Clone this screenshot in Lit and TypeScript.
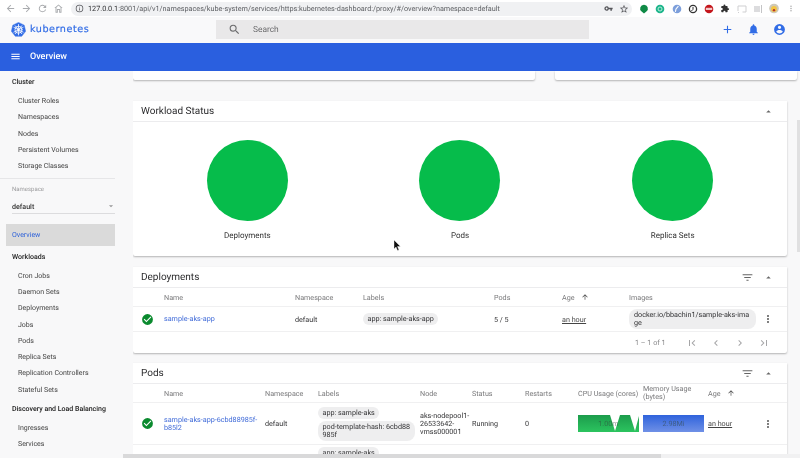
import { LitElement, html, css, svg } from "lit";
import { customElement } from "lit/decorators.js";

const icon = (d: string, size = 12, cls = "") =>
  html`<svg class=${cls} width=${size} height=${size} viewBox="0 0 24 24" fill="currentColor"><path d=${d}></path></svg>`;

const P = {
  back: "M20 11H7.8l5.6-5.6L12 4l-8 8 8 8 1.4-1.4L7.8 13H20z",
  fwd: "M4 11h12.2l-5.6-5.6L12 4l8 8-8 8-1.4-1.4 5.6-5.6H4z",
  reload: "M17.65 6.35A8 8 0 1 0 19.73 14h-2.08A6 6 0 1 1 12 6c1.66 0 3.14.69 4.22 1.78L13 11h7V4z",
  home: "M12 3 3 11h2.5v10h5v-6h3v6h5V11H21zM12 5.7l4.5 4V19h-1v-6h-7v6h-1v-9.3z",
  info: "M11 7h2v2h-2zm0 4h2v6h-2zm1-9a10 10 0 1 0 0 20 10 10 0 0 0 0-20zm0 18a8 8 0 1 1 0-16 8 8 0 0 1 0 16z",
  key: "M12.65 10A6 6 0 1 0 12.65 14H17v4h4v-4h2v-4zM7 14.5a2.5 2.5 0 1 1 0-5 2.5 2.5 0 0 1 0 5z",
  star: "M22 9.24l-7.19-.62L12 2 9.19 8.63 2 9.24l5.46 4.73L5.82 21 12 17.27 18.18 21l-1.63-7.03zM12 15.4l-3.76 2.27 1-4.28-3.32-2.88 4.38-.38L12 6.1l1.71 4.04 4.38.38-3.32 2.88 1 4.28z",
  puzzle: "M20.5 11H19V7a2 2 0 0 0-2-2h-4V3.5a2.5 2.5 0 0 0-5 0V5H4a2 2 0 0 0-2 2v3.8h1.5a2.7 2.7 0 0 1 0 5.4H2V20a2 2 0 0 0 2 2h3.8v-1.5a2.7 2.7 0 0 1 5.4 0V22H17a2 2 0 0 0 2-2v-4h1.5a2.5 2.5 0 0 0 0-5z",
  search: "M15.5 14h-.79l-.28-.27A6.471 6.471 0 0 0 16 9.5 6.5 6.5 0 1 0 9.5 16c1.61 0 3.09-.59 4.23-1.57l.27.28v.79l5 4.99L20.49 19l-4.99-5zm-6 0C7.01 14 5 11.99 5 9.5S7.01 5 9.5 5 14 7.01 14 9.5 11.99 14 9.5 14z",
  plus: "M19 13h-6v6h-2v-6H5v-2h6V5h2v6h6z",
  bell: "M12 22a2 2 0 0 0 2-2h-4a2 2 0 0 0 2 2zm6-6v-5c0-3.1-1.6-5.6-4.5-6.3V4a1.5 1.5 0 0 0-3 0v.7C7.6 5.4 6 7.9 6 11v5l-2 2v1h16v-1z",
  acct: "M12 2a10 10 0 1 0 0 20 10 10 0 0 0 0-20zm0 3a3 3 0 1 1 0 6 3 3 0 0 1 0-6zm0 14.2a7.2 7.2 0 0 1-6-3.2c0-2 4-3.1 6-3.1s6 1.1 6 3.1a7.2 7.2 0 0 1-6 3.2z",
  menu: "M3 18h18v-2H3zm0-5h18v-2H3zm0-7v2h18V6z",
  filter: "M10 18h4v-2h-4zM3 6v2h18V6zm3 7h12v-2H6z",
  up: "M7 14l5-5 5 5z",
  down: "M7 10l5 5 5-5z",
  arrowUp: "M4 12l1.4 1.4L11 7.8V20h2V7.8l5.6 5.6L20 12l-8-8z",
  check: "M12 2a10 10 0 1 0 0 20 10 10 0 0 0 0-20zm-2 15-5-5 1.4-1.4 3.6 3.6 7.6-7.6L19 8z",
  more: "M12 8a2 2 0 1 0 0-4 2 2 0 0 0 0 4zm0 2a2 2 0 1 0 0 4 2 2 0 0 0 0-4zm0 6a2 2 0 1 0 0 4 2 2 0 0 0 0-4z",
  first: "M18.4 16.6 13.8 12l4.6-4.6L17 6l-6 6 6 6zM6 6h2v12H6z",
  prev: "M15.4 7.4 14 6l-6 6 6 6 1.4-1.4-4.6-4.6z",
  next: "M10 6 8.6 7.4l4.6 4.6-4.6 4.6L10 18l6-6z",
  last: "M5.6 7.4 10.2 12l-4.6 4.6L7 18l6-6-6-6zM16 6h2v12h-2z",
};

const logo = html`<svg width="15" height="15" viewBox="0 0 32 32">
  <path fill="#326de6" d="M16 .8 28.2 6.7 31.2 19.9 22.8 30.5H9.2L.8 19.9 3.8 6.7z" stroke="#326de6" stroke-width="1" stroke-linejoin="round"></path>
  <g fill="none" stroke="#fff" stroke-width="1.7" stroke-linecap="round">
    <circle cx="16" cy="16.5" r="7.5"></circle>
    <path d="M16 5.5v22M6.2 11.5l19.6 10M25.8 11.5l-19.6 10M9 25l14-17M23 25 9 8"></path>
  </g>
  <circle cx="16" cy="16.5" r="2" fill="#fff"></circle>
</svg>`;

const clusterItems = ["Cluster Roles", "Namespaces", "Nodes", "Persistent Volumes", "Storage Classes"];
const workloadItems = ["Cron Jobs", "Daemon Sets", "Deployments", "Jobs", "Pods", "Replica Sets", "Replication Controllers", "Stateful Sets"];
const discoveryItems = ["Ingresses", "Services"];

const cpuSpark = svg`<svg class="spark" viewBox="0 0 61 17" preserveAspectRatio="none">
  <defs><linearGradient id="g" x1="0" y1="0" x2="0" y2="1"><stop offset="0" stop-color="#1c9c4c"></stop><stop offset="1" stop-color="#2cc45f"></stop></linearGradient></defs>
  <path fill="url(#g)" d="M0 0H32L37 16 42 0H52L57 16 61 1V17H0z"></path></svg>`;
const memSpark = svg`<svg class="spark" viewBox="0 0 61 17" preserveAspectRatio="none">
  <defs><linearGradient id="b" x1="0" y1="0" x2="0" y2="1"><stop offset="0" stop-color="#2f63dc"></stop><stop offset="1" stop-color="#6f90e6"></stop></linearGradient></defs>
  <rect width="61" height="17" fill="url(#b)"></rect></svg>`;

@customElement("app-root")
export class AppRoot extends LitElement {
  static styles = css`
    :host { display: flex; flex-direction: column; position: relative; width: 800px; height: 458px; overflow: hidden;
      font-family: Roboto, "Liberation Sans", sans-serif; font-size: 7.2px; color: #333335; background: #f8f8f9;
      text-rendering: geometricPrecision; filter: blur(.3px); }
    svg { display: block; flex: none; }

    .chrome { height: 17px; flex: none; display: flex; align-items: center; background: #fff; color: #a9abae; box-sizing: border-box; padding-left: 4.5px; }
    .nav { display: flex; gap: 5.3px; width: 66.5px; flex: none; }
    .addr { flex: none; width: 561px; height: 14px; display: flex; align-items: center; background: #f0f1f3; border-radius: 7px; padding: 0 3.5px 0 4px; box-sizing: border-box; color: #55565a; }
    .addr .u { flex: 1; margin-left: 4px; font-size: 7.25px; white-space: nowrap; color: #5e6064; }
    .addr .u b { font-weight: 400; color: #2e2f31; }
    .addr .gap { width: 6px; }
    .ext { display: flex; align-items: center; gap: 6.3px; margin-left: 7px; }
    .ext > svg { width: 10px; }

    .top { height: 25.5px; flex: none; display: flex; align-items: center; background: #f9f9fa; padding-left: 11px; }
    .brand { width: 186px; margin-left: 4px; flex: none; font-family: "DejaVu Sans", sans-serif; font-size: 9.6px; letter-spacing: .55px; color: #326de6; -webkit-text-stroke: .2px #326de6; }
    .search { width: 373px; height: 19px; flex: none; background: #e9e8e9; display: flex; align-items: center; color: #6b6b6d; font-size: 8.4px; padding-left: 11.5px; box-sizing: border-box; gap: 12.5px; }
    .acts { display: flex; gap: 13px; margin-left: 131.5px; color: #326de6; }

    .blue { height: 28.5px; flex: none; background: #2a5fdf; color: #fff; display: flex; align-items: center; padding-left: 10px; gap: 9px; font-size: 9px; font-weight: 500; }

    .main { flex: 1; min-height: 0; display: flex; overflow: hidden; }
    .side { width: 133px; flex: none; overflow: hidden; }
    .st { height: 16px; line-height: 16px; margin: 3px 0 3px 12px; color: #222; font-weight: 500; font-size: 7px; white-space: nowrap; }
    .it { height: 16.25px; line-height: 16.25px; padding-left: 18px; color: #444; font-size: 7px; white-space: nowrap; }
    .div { height: 1px; width: 115px; background: #e6e6e8; margin-top: 4px; }
    .nsl { height: 10px; line-height: 10px; margin: 6px 0 0 12px; font-size: 6px; color: #9a9a9c; }
    .nsv { height: 14px; width: 103px; margin: 4px 0 0 12px; border-bottom: 1px solid #dcdcde; display: flex; align-items: center; justify-content: space-between; color: #333; font-size: 7.1px; font-weight: 500; }
    .nsv svg { color: #999; margin-right: -1px; }
    .sel { height: 22px; width: 109px; margin: 9.5px 0 0 6px; padding-left: 6px; box-sizing: border-box; line-height: 22px; background: #dadada; color: #2f62d8; font-size: 7px; }

    .content { flex: 1; min-width: 0; overflow: hidden; }
    .frow { display: flex; gap: 20px; height: 9px; margin-bottom: 21px; }
    .card { background: #fff; box-shadow: 0 1px 2px rgba(0,0,0,.28); border-radius: 0 0 2px 2px; }
    .frag1 { width: 402px; flex: none; }
    .frag2 { width: 242px; flex: none; }
    .wide { width: 654px; margin-bottom: 10px; }
    .wl { margin-bottom: 11px; }
    .hd { height: 18px; display: flex; align-items: center; padding: 2px 13px 0 8px; box-sizing: content-box; font-size: 10px; line-height: 18px; color: #2c2c2e; border-bottom: 1px solid #ececee; }
    .hd span { flex: 1; }
    .hd svg { color: #666; margin-top: -2px; }
    .hd .f { margin-right: 9.5px; }

    .charts { display: grid; grid-template-columns: repeat(3, 1fr); padding: 18px 8px 14px; }
    .chart { display: flex; flex-direction: column; align-items: center; gap: 9px; font-size: 8px; color: #333; }
    .circle { width: 81px; height: 81px; border-radius: 50%; background: #06bc4b; }
    .chart span { height: 12px; line-height: 12px; }

    .r { display: grid; align-items: center; border-bottom: 1px solid #f0f0f1; }
    .dep { grid-template-columns: 31px 131px 68px 131px 68px 67px 129px 1fr; }
    .pod { grid-template-columns: 31px 101px 53px 102px 52px 53px 53px 65px 65px 61px 1fr; }
    .h { color: #78787a; height: 18px; }
    .c { padding-right: 5px; min-width: 0; box-sizing: border-box; }
    .ok { color: #0a8a2e; display: flex; justify-content: center; padding: 0; margin-right: 2px; }
    .lnk { color: #3f6ad8; line-height: 8px; }
    .chip { display: block; width: fit-content; background: #eeeeef; border-radius: 8px; padding: 2px 4.5px; line-height: 8px; word-break: break-all; margin: 2px 0; box-sizing: border-box; max-width: 100%; }
    .img { width: 127px; padding: 2px 6px 2px 5px; }
    .plain { padding-right: 2px; }
    .under { color: #444; text-decoration: underline; text-underline-offset: 1px; }
    .sort { display: flex; align-items: center; gap: 6px; }
    .sort svg { color: #444; }
    .more { color: #555; display: flex; justify-content: flex-end; padding-right: 13px; }
    .drow { height: 24px; }
    .foot { height: 21px; display: flex; align-items: center; padding-left: 502px; color: #8a8a8c; }
    .foot .pg { display: flex; gap: 12.3px; margin-left: 20px; color: #a5a5a7; }
    .prow { height: 41px; }
    .nrow { height: 30px; align-items: start; }
    .node { line-height: 8px; padding-right: 2px; }
    .sp { position: relative; height: 17px; width: 61px; padding: 0; }
    .spark { width: 100%; height: 17px; }
    .sp span { position: absolute; inset: 0; display: flex; align-items: center; justify-content: center; color: rgba(50,70,60,.55); }
    .memh { line-height: 8.5px; }

    .hbar { position: absolute; left: 123px; right: 0; bottom: 0; height: 4px; background: #f1f1f2; }
    .hthumb { width: 538px; height: 4px; background: #d9d9da; }
    .vbar { position: absolute; top: 120px; right: 0; width: 3px; height: 132px; background: #e0e0e1; }
    .cursor { position: absolute; left: 394px; top: 240px; }
  `;

  private exts() {
    return html`<div class="ext">
      <svg height="10" viewBox="0 0 10 10"><path fill="#0f8a46" d="M5 .8a3.8 3.8 0 0 1 2.4 6.8L5 9.6 2.6 7.6A3.8 3.8 0 0 1 5 .8z"></path></svg>
      <svg height="10" viewBox="0 0 10 10"><circle cx="5" cy="5" r="4.3" fill="#1db58b"></circle><circle cx="5" cy="5" r="2" fill="none" stroke="#c9f2e3" stroke-width=".9"></circle></svg>
      <svg height="10" viewBox="0 0 10 10"><circle cx="5" cy="5" r="4.3" fill="#7d9fdb"></circle><path d="M6.4 2.2 4 5l-.6 2.8" stroke="#fff" stroke-width="1.1" fill="none"></path></svg>
      <svg height="10" viewBox="0 0 10 10"><circle cx="5" cy="5" r="3.6" fill="#fff" stroke="#333" stroke-width="1.3"></circle><path d="M5 3v2.4L3.4 7" stroke="#333" stroke-width="1" fill="none"></path></svg>
      <svg height="10" viewBox="0 0 10 10"><circle cx="5" cy="5" r="4.3" fill="#c4161c"></circle><rect x="1.8" y="3.8" width="6.4" height="2.2" fill="#f3c6c6"></rect></svg>
      <svg height="9" viewBox="0 0 24 24" fill="#333"><path d=${P.puzzle}></path></svg>
      <svg height="10" viewBox="0 0 10 10"><path d="M1 7V2h8v6H5.5" fill="none" stroke="#cfcfd1"></path><path d="M1 8.5h1" stroke="#cfcfd1"></path></svg>
      <svg height="10" viewBox="0 0 10 10"><rect x="1" y="2" width="6" height="6" fill="#dcdcde"></rect><path d="M8.5 1v8" stroke="#c4c4c6"></path></svg>
      <svg height="11" viewBox="0 0 11 11"><circle cx="5.5" cy="5.5" r="5.3" fill="#cfc9b8"></circle><circle cx="5.5" cy="6" r="3.2" fill="#f4c542"></circle><circle cx="5.5" cy="7.3" r="1.3" fill="#b5322a"></circle></svg>
      <svg height="9" viewBox="0 0 24 24" fill="#a9a9ab"><path d=${P.more}></path></svg>
    </div>`;
  }

  render() {
    return html`
      <div class="chrome">
        <div class="nav">${icon(P.back, 11)}${icon(P.fwd, 11)}${icon(P.reload, 11)}${icon(P.home, 11)}</div>
        <div class="addr">
          ${icon(P.info, 9)}
          <span class="u"><b>127.0.0.1</b>:8001/api/v1/namespaces/kube-system/services/https:kubernetes-dashboard:/proxy/#/overview?namespace=default</span>
          ${icon(P.key, 9)}<span class="gap"></span>${icon(P.star, 10)}
        </div>
        ${this.exts()}
      </div>

      <div class="top">
        ${logo}
        <div class="brand">kubernetes</div>
        <div class="search">${icon(P.search, 13)}<span>Search</span></div>
        <div class="acts">${icon(P.plus, 13)}${icon(P.bell, 13)}${icon(P.acct, 13)}</div>
      </div>

      <div class="blue">${icon(P.menu, 11)}<span>Overview</span></div>

      <div class="main">
        <div class="side">
          <div class="st">Cluster</div>
          ${clusterItems.map((i) => html`<div class="it">${i}</div>`)}
          <div class="div"></div>
          <div class="nsl">Namespace</div>
          <div class="nsv"><span>default</span>${icon(P.down, 10)}</div>
          <div class="sel">Overview</div>
          <div class="st">Workloads</div>
          ${workloadItems.map((i) => html`<div class="it">${i}</div>`)}
          <div class="st">Discovery and Load Balancing</div>
          ${discoveryItems.map((i) => html`<div class="it">${i}</div>`)}
        </div>

        <div class="content">
          <div class="frow"><div class="card frag1"></div><div class="card frag2"></div></div>

          <div class="card wide wl">
            <div class="hd"><span>Workload Status</span>${icon(P.up, 11)}</div>
            <div class="charts">
              ${["Deployments", "Pods", "Replica Sets"].map((n) => html`<div class="chart"><div class="circle"></div><span>${n}</span></div>`)}
            </div>
          </div>

          <div class="card wide">
            <div class="hd"><span>Deployments</span>${icon(P.filter, 13, "f")}${icon(P.up, 11)}</div>
            <div class="r dep h">
              <div></div><div>Name</div><div>Namespace</div><div>Labels</div><div>Pods</div>
              <div class="sort">Age ${icon(P.arrowUp, 8)}</div><div>Images</div><div></div>
            </div>
            <div class="r dep drow">
              <div class="c ok">${icon(P.check, 13)}</div>
              <div class="c lnk">sample-aks-app</div>
              <div class="c">default</div>
              <div class="c"><span class="chip">app: sample-aks-app</span></div>
              <div class="c">5 / 5</div>
              <div class="c under">an hour</div>
              <div class="c plain"><span class="chip img">docker.io/bbachin1/sample-aks-image</span></div>
              <div class="c more">${icon(P.more, 12)}</div>
            </div>
            <div class="foot">
              <span>1 – 1 of 1</span>
              <div class="pg">${icon(P.first, 12)}${icon(P.prev, 12)}${icon(P.next, 12)}${icon(P.last, 12)}</div>
            </div>
          </div>

          <div class="card wide">
            <div class="hd"><span>Pods</span>${icon(P.filter, 13, "f")}${icon(P.up, 11)}</div>
            <div class="r pod h">
              <div></div><div>Name</div><div>Namespace</div><div>Labels</div><div>Node</div><div>Status</div><div>Restarts</div>
              <div style="white-space:nowrap">CPU Usage (cores)</div><div class="memh">Memory Usage (bytes)</div>
              <div class="sort">Age ${icon(P.arrowUp, 8)}</div><div></div>
            </div>
            <div class="r pod prow">
              <div class="c ok">${icon(P.check, 13)}</div>
              <div class="c lnk">sample-aks-app-6cbd88985f-b85l2</div>
              <div class="c">default</div>
              <div class="c"><span class="chip">app: sample-aks</span><span class="chip">pod-template-hash: 6cbd88985f</span></div>
              <div class="c node">aks-nodepool1-26533642-vmss000001</div>
              <div class="c">Running</div>
              <div class="c">0</div>
              <div class="c sp">${cpuSpark}<span>1.00m</span></div>
              <div class="c sp">${memSpark}<span>2.98Mi</span></div>
              <div class="c under">an hour</div>
              <div class="c more">${icon(P.more, 12)}</div>
            </div>
            <div class="r pod nrow">
              <div></div><div></div><div></div>
              <div class="c"><span class="chip">app: sample-aks</span></div>
            </div>
          </div>
        </div>
      </div>

      <div class="vbar"></div>
      <div class="hbar"><div class="hthumb"></div></div>
      <svg class="cursor" width="8" height="11" viewBox="0 0 8 11"><path d="M0 0v9l2-2 1.5 3.5 1.5-.6L3.5 6.5H6.5z" fill="#111" stroke="#fff" stroke-width=".4"></path></svg>
    `;
  }
}
